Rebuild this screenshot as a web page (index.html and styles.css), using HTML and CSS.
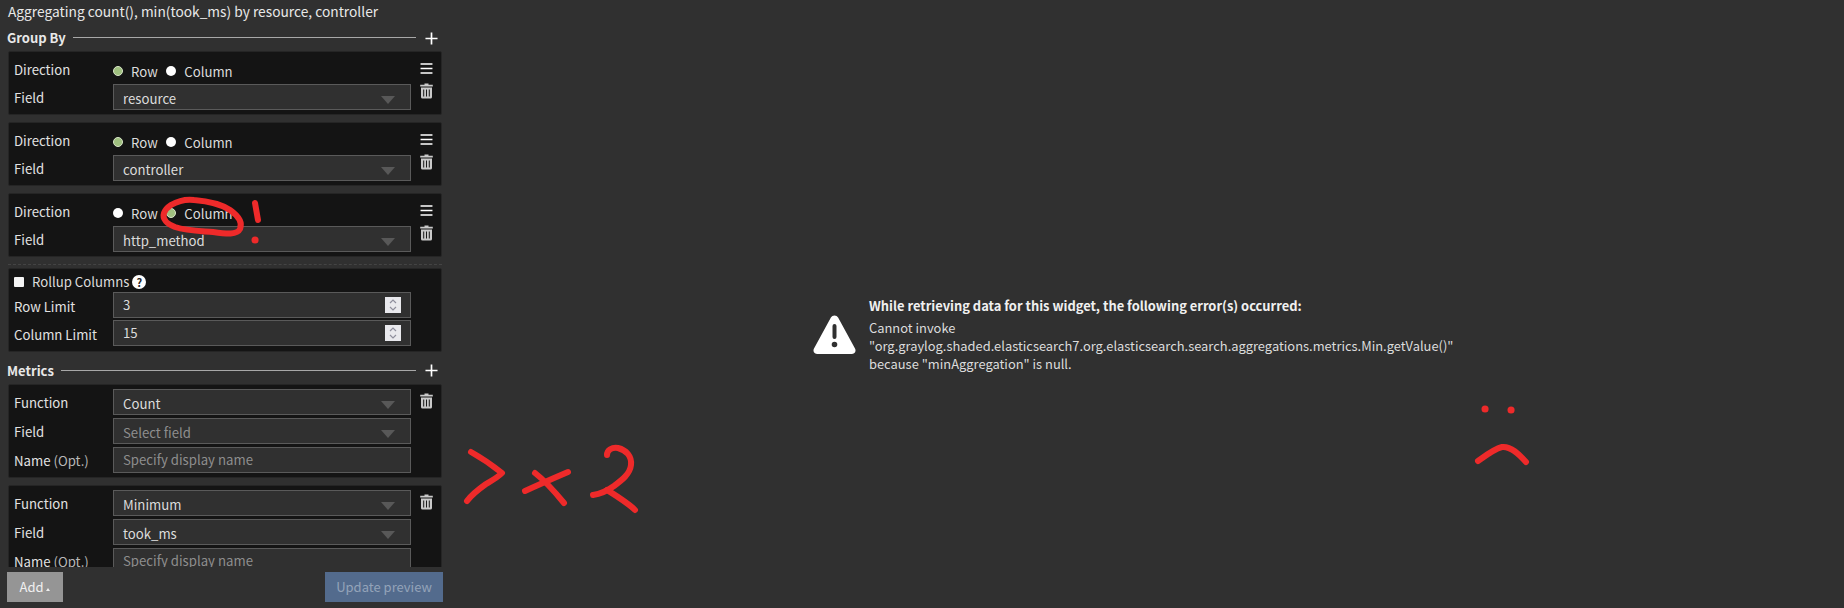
FILE: index.html
```html
<!DOCTYPE html>
<html lang="en">
<head>
<meta charset="utf-8">
<title>Aggregation builder</title>
<link rel="stylesheet" href="styles.css">
</head>
<body>
<div class="page">
  <aside class="sidebar">
    <div class="summary">Aggregating count(), min(took_ms) by resource, controller</div>
    <div class="scroll">
      <div class="section-head"><span class="section-title">Group By</span><span class="rule"></span>
        <svg class="plus" viewBox="0 0 14 14"><path d="M7 0.5v13M0.5 7h13"/></svg></div>

      <div class="card">
        <div class="fields">
          <div class="row radio-row"><span class="label label-dir">Direction</span>
            <div class="radios"><span class="radio on"></span><span class="radio-text">Row</span><span class="radio"></span><span class="radio-text">Column</span></div></div>
          <div class="row"><span class="label">Field</span><div class="input select">resource<span class="caret"></span></div></div>
        </div>
        <div class="actions">
          <svg class="bars" viewBox="0 0 13 12"><path d="M0 1h13M0 6h13M0 11h13"/></svg>
          <svg class="trash" viewBox="0 0 13 16"><path d="M4.5 0.5h4v1.2h4.3v1.8H0.2V1.7h4.3zM1 4.5h11V14a1.6 1.6 0 0 1-1.6 1.6H2.6A1.6 1.6 0 0 1 1 14z"/><path class="slot" d="M3.7 6.5v7M6.5 6.500v7M9.3 6.500v7"/></svg>
        </div>
      </div>

      <div class="card">
        <div class="fields">
          <div class="row radio-row"><span class="label label-dir">Direction</span>
            <div class="radios"><span class="radio on"></span><span class="radio-text">Row</span><span class="radio"></span><span class="radio-text">Column</span></div></div>
          <div class="row"><span class="label">Field</span><div class="input select">controller<span class="caret"></span></div></div>
        </div>
        <div class="actions">
          <svg class="bars" viewBox="0 0 13 12"><path d="M0 1h13M0 6h13M0 11h13"/></svg>
          <svg class="trash" viewBox="0 0 13 16"><path d="M4.5 0.5h4v1.2h4.3v1.8H0.2V1.7h4.3zM1 4.5h11V14a1.6 1.6 0 0 1-1.6 1.6H2.6A1.6 1.6 0 0 1 1 14z"/><path class="slot" d="M3.7 6.5v7M6.5 6.500v7M9.3 6.500v7"/></svg>
        </div>
      </div>

      <div class="card">
        <div class="fields">
          <div class="row radio-row"><span class="label label-dir">Direction</span>
            <div class="radios"><span class="radio"></span><span class="radio-text">Row</span><span class="radio on"></span><span class="radio-text">Column</span></div></div>
          <div class="row"><span class="label">Field</span><div class="input select">http_method<span class="caret"></span></div></div>
        </div>
        <div class="actions">
          <svg class="bars" viewBox="0 0 13 12"><path d="M0 1h13M0 6h13M0 11h13"/></svg>
          <svg class="trash" viewBox="0 0 13 16"><path d="M4.5 0.5h4v1.2h4.3v1.8H0.2V1.7h4.3zM1 4.5h11V14a1.6 1.6 0 0 1-1.6 1.6H2.6A1.6 1.6 0 0 1 1 14z"/><path class="slot" d="M3.7 6.5v7M6.5 6.500v7M9.3 6.500v7"/></svg>
        </div>
      </div>

      <div class="divider"></div>

      <div class="card limits">
        <div class="fields">
          <div class="rollup"><span class="checkbox"></span><span>Rollup Columns</span><span class="help">?</span></div>
          <div class="row"><span class="label">Row Limit</span><div class="input number">3<span class="spin"><svg viewBox="0 0 16 16"><path d="M5 6l3-3 3 3M5 10l3 3 3-3"/></svg></span></div></div>
          <div class="row"><span class="label">Column Limit</span><div class="input number">15<span class="spin"><svg viewBox="0 0 16 16"><path d="M5 6l3-3 3 3M5 10l3 3 3-3"/></svg></span></div></div>
        </div>
      </div>

      <div class="section-head metrics-head"><span class="section-title">Metrics</span><span class="rule"></span>
        <svg class="plus" viewBox="0 0 14 14"><path d="M7 0.5v13M0.5 7h13"/></svg></div>

      <div class="card metric">
        <div class="fields">
          <div class="row"><span class="label">Function</span><div class="input select">Count<span class="caret"></span></div></div>
          <div class="row"><span class="label">Field</span><div class="input select muted">Select field<span class="caret"></span></div></div>
          <div class="row"><span class="label">Name <span class="opt">(Opt.)</span></span><div class="input text muted">Specify display name</div></div>
        </div>
        <div class="actions">
          <svg class="trash" viewBox="0 0 13 16"><path d="M4.5 0.5h4v1.2h4.3v1.8H0.2V1.7h4.3zM1 4.5h11V14a1.6 1.6 0 0 1-1.6 1.6H2.6A1.6 1.6 0 0 1 1 14z"/><path class="slot" d="M3.7 6.5v7M6.5 6.500v7M9.3 6.500v7"/></svg>
        </div>
      </div>

      <div class="card metric">
        <div class="fields">
          <div class="row"><span class="label">Function</span><div class="input select">Minimum<span class="caret"></span></div></div>
          <div class="row"><span class="label">Field</span><div class="input select">took_ms<span class="caret"></span></div></div>
          <div class="row"><span class="label">Name <span class="opt">(Opt.)</span></span><div class="input text muted">Specify display name</div></div>
        </div>
        <div class="actions">
          <svg class="trash" viewBox="0 0 13 16"><path d="M4.5 0.5h4v1.2h4.3v1.8H0.2V1.7h4.3zM1 4.5h11V14a1.6 1.6 0 0 1-1.6 1.6H2.6A1.6 1.6 0 0 1 1 14z"/><path class="slot" d="M3.7 6.5v7M6.5 6.500v7M9.3 6.500v7"/></svg>
        </div>
      </div>
    </div>
    <div class="footer">
      <button class="btn btn-add">Add <span class="up-caret"></span></button>
      <button class="btn btn-update">Update preview</button>
    </div>
  </aside>

  <main class="preview">
    <div class="error">
      <svg class="warn" viewBox="0 0 43 39"><path fill-rule="evenodd" d="M21.500 0.500c1.500 0 2.800.8 3.600 2.100L42 33.500c1.500 2.700-.4 5.500-3.500 5.500H4.500C1.400 39-.5 36.200 1 33.500L17.900 2.600C18.700 1.300 20 .5 21.500.5zM19.500 11a2 2 0 0 1 4 0v11a2 2 0 0 1-4 0zM21.500 26.700a2.800 2.800 0 1 0 0 5.600 2.800 2.800 0 0 0 0-5.600z"/></svg>
      <div class="error-text">
        <div class="error-title">While retrieving data for this widget, the following error(s) occurred:</div>
        <div class="error-msg">Cannot invoke<br>"org.graylog.shaded.elasticsearch7.org.elasticsearch.search.aggregations.metrics.Min.getValue()"<br>because "minAggregation" is null.</div>
      </div>
    </div>
  </main>

  <svg class="scribbles" viewBox="0 0 1844 608" aria-hidden="true">
    <path d="M171 205C178 201 186 199 194 200C206 201 221 204 230 210C237 215 243 222 240 229C237 235 227 234 213 232C201 231 187 231 175 227C167 224 162 219 164 213C165 210 168 207 171 205"/>
    <path d="M255 203L258 220"/>
    <path class="dot" d="M255 240h.1"/>
    <path d="M471 452C480 457 492 465 502 473C497 478 491 481 486 484C479 489 472 494 467 501"/>
    <path d="M525 491C538 485 554 478 568 472"/>
    <path d="M535 473C544 480 555 492 564 503"/>
    <path d="M607 455C607 450 612 447 618 448C626 450 632 456 631 465C630 474 622 480 614 486C607 491 600 494 593 495"/>
    <path d="M607 490C615 495 628 503 635 510"/>
    <path class="dot" d="M1485 409h.1"/>
    <path class="dot" d="M1511 410h.1"/>
    <path d="M1478 461C1485 456 1494 449 1502 447C1511 446 1519 454 1526 462"/>
  </svg>
</div>
</body>
</html>
```
FILE: styles.css
```css
* { box-sizing: border-box; }
html, body { margin: 0; height: 100%; }
body {
  background: #303030;
  color: #e2e2e2;
  font-family: "Noto Sans CJK SC", "Noto Sans", sans-serif;
  font-size: 13.2px;
  line-height: 18px;
  overflow: hidden;
}
.page { position: relative; display: flex; width: 1844px; height: 608px; overflow: hidden; }

.sidebar { width: 450px; height: 608px; display: flex; flex-direction: column; flex: none; }
.summary { height: 21px; padding: 2px 0 0 8px; line-height: 18px; font-size: 13.75px; color: #e8e8e8; white-space: nowrap; }
.scroll { height: 546px; overflow: hidden; padding-left: 7px; }

.section-head { display: flex; align-items: center; height: 30px; width: 436px; padding-top: 4px; }
.section-title { font-weight: 700; font-size: 13px; color: #e8e8e8; margin-right: 7px; }
.rule { flex: 1; height: 1px; background: #a8a8a8; margin-top: -1px; }
.plus { width: 13px; height: 13px; margin: 0 5px 0 9px; flex: none; }
.plus path { stroke: #fff; stroke-width: 1.8; fill: none; }

.card {
  display: flex;
  width: 434px;
  margin-left: 1px;
  background: #141414;
  border: 1px solid #252525;
  border-radius: 2px;
  padding: 0 0 0 5px;
  margin-bottom: 7px;
  height: 64px;
}
.fields { width: 398px; flex: none; display: flex; flex-direction: column; }
.row { display: flex; align-items: center; }
.label { width: 99px; flex: none; color: #e2e2e2; padding-top: 2px; }
.opt { color: #b8b8b8; }
.radio-row { height: 32px; padding-top: 4px; align-items: center; }
.label-dir { margin-top: -2px; }
.radios { display: flex; align-items: center; margin-top: 2px; }
.radio { width: 10px; height: 10px; border-radius: 50%; background: #fff; flex: none; margin-right: 8px; margin-top: -1px; }
.radio.on { background: #9fc07f; border: 1.5px solid #d9e6c9; }
.radio-text { margin-right: 8.500px; margin-top: 1px; color: #dcdcdc; }

.input {
  position: relative;
  width: 298px;
  height: 26px;
  background: #303030;
  border: 1px solid #5a5a5a;
  padding: 0 9px;
  line-height: 24px;
  color: #dcdcdc;
  white-space: nowrap;
}
.muted { color: #8e8e8e; }
.select { line-height: 27px; }
.caret {
  position: absolute;
  right: 15px;
  top: 11px;
  width: 0;
  height: 0;
  border-left: 7px solid transparent;
  border-right: 7px solid transparent;
  border-top: 8px solid #585858;
}
.actions { flex: 1; display: flex; flex-direction: column; align-items: center; padding: 11px 0 0 0; }
.bars { width: 13px; height: 11px; flex: none; }
.bars path { stroke: #fff; stroke-width: 1.7; fill: none; }
.trash { width: 13px; height: 16px; flex: none; margin-top: 9px; fill: #c9c9c9; }
.trash .slot { stroke: #1a1a1a; stroke-width: 1; fill: none; }

.divider { height: 0; width: 434px; margin: 0 0 3px 1px; border-top: 1px dashed #444; }
.limits { height: 84px; }
.rollup { display: flex; align-items: center; height: 23px; padding: 3px 0 0 0; color: #dcdcdc; }
.checkbox { width: 10px; height: 10px; background: #f4f4f4; border-radius: 1px; margin-right: 8px; }
.help {
  width: 14px; height: 14px; margin-left: 3px; border-radius: 50%; background: #fff; color: #222;
  font-size: 11px; font-weight: 700; line-height: 14px; text-align: center;
}
.number { line-height: 24px; margin-bottom: 2px; }
.spin { position: absolute; right: 9px; top: 4px; width: 16px; height: 16px; background: #e9e9ed; display: flex; }
.spin svg { width: 16px; height: 16px; }
.spin path { stroke: #8f8f9d; stroke-width: 1.2; fill: none; }

.metrics-head { height: 25px; padding: 0 0 2px 0; }
.metric { height: 94px; padding-top: 4px; }
.metric .row { margin-bottom: 3px; }
.metric .actions { padding-top: 4px; }
.metric .trash { margin-top: 0; }

.footer { height: 41px; display: flex; justify-content: space-between; align-items: flex-start; padding: 5px 7px 0 7px; }
.btn { height: 30px; border: 0; padding: 0; font: inherit; font-size: 13px; }
.btn-add { width: 56px; background: #959595; color: #f0f0f0; }
.up-caret { display: inline-block; width: 0; height: 0; border-left: 2.5px solid transparent; border-right: 2.5px solid transparent; border-bottom: 3px solid #eee; vertical-align: 1px; }
.btn-update { width: 118px; background: #536b8d; color: #93a3b9; }

.preview { flex: 1; position: relative; }
.error { position: absolute; left: 363px; top: 297px; display: flex; }
.warn { width: 43px; height: 39px; margin-top: 18px; margin-right: 13px; fill: #fff; flex: none; }
.error-title { font-weight: 700; font-size: 12.9px; color: #f0f0f0; height: 22px; line-height: 18px; white-space: nowrap; }
.error-msg { font-size: 12.9px; line-height: 18px; color: #dcdcdc; white-space: nowrap; }

.scribbles { position: absolute; left: 0; top: 0; width: 1844px; height: 608px; pointer-events: none; }
.scribbles path { fill: none; stroke: #ee2a2a; stroke-width: 6; stroke-linecap: round; stroke-linejoin: round; }
.scribbles .dot { stroke-width: 7; }
```
